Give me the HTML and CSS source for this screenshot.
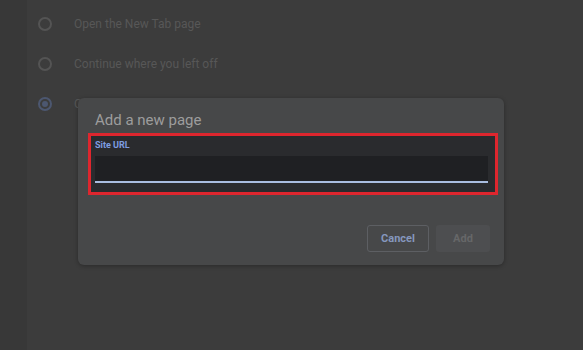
FILE: index.html
```html
<!DOCTYPE html>
<html lang="en">
<head>
  <meta charset="UTF-8">
  <meta name="viewport" content="width=device-width, initial-scale=1.0">
  <title>On startup</title>
  <link rel="stylesheet" href="styles.css">
</head>
<body>
  <div class="page">
    <div class="card">
      <div class="row">
        <span class="radio"></span>
        <span class="row-label">Open the New Tab page</span>
      </div>
      <div class="row">
        <span class="radio"></span>
        <span class="row-label">Continue where you left off</span>
      </div>
      <div class="row">
        <span class="radio checked"></span>
        <span class="row-label">Open a specific page or set of pages</span>
      </div>
    </div>
  </div>

  <div class="dialog">
    <div class="dialog-title">Add a new page</div>
    <div class="highlight">
      <div class="field-label">Site URL</div>
      <div class="field-input"></div>
    </div>
    <div class="dialog-buttons">
      <button class="button cancel">Cancel</button>
      <button class="button add">Add</button>
    </div>
  </div>
</body>
</html>
```

FILE: styles.css
```css
body {
  margin: 0;
  background-color: #383838;
  font-family: Roboto, "Liberation Sans", Arial, sans-serif;
  overflow: hidden;
}
.page {
  padding-left: 27px;
  height: 350px;
}
.card {
  height: 350px;
  padding-top: 4px;
  box-sizing: border-box;
  background-color: #3c3c3c;
}
.row {
  display: flex;
  align-items: center;
  height: 40px;
  padding-left: 11px;
}
.radio {
  width: 10px;
  height: 10px;
  border: 2px solid #545454;
  border-radius: 50%;
  margin-right: 22px;
  position: relative;
}
.radio.checked {
  border-color: #4c5770;
}
.radio.checked::after {
  content: "";
  position: absolute;
  left: 2px;
  top: 2px;
  width: 6px;
  height: 6px;
  border-radius: 50%;
  background-color: #4c5770;
}
.row-label {
  font-size: 12px;
  color: #575757;
}
.dialog {
  position: absolute;
  left: 78px;
  top: 98px;
  width: 426px;
  height: 167px;
  box-sizing: border-box;
  padding: 12px 6px 0 10px;
  background-color: #474849;
  border-radius: 6px;
  box-shadow: 0 1px 4px rgba(0, 0, 0, 0.3);
}
.dialog-title {
  height: 20px;
  line-height: 20px;
  padding-left: 7px;
  margin-bottom: 3px;
  font-size: 15px;
  color: #9d9d9d;
}
.highlight {
  height: 62px;
  box-sizing: border-box;
  border: 3px solid #de262e;
  padding: 3px 7px 9px 4px;
  background-color: #2a2b2e;
}
.field-label {
  height: 12px;
  line-height: 12px;
  font-size: 9px;
  font-weight: bold;
  color: #7e9de0;
}
.field-input {
  margin-top: 5px;
  height: 27px;
  box-sizing: border-box;
  background-color: #1f2023;
  border-bottom: 2px solid #a9bde0;
}
.dialog-buttons {
  display: flex;
  justify-content: flex-end;
  gap: 7px;
  margin-top: 30px;
  margin-right: 8px;
}
.button {
  height: 27px;
  border-radius: 3px;
  font-family: Roboto, "Liberation Sans", Arial, sans-serif;
  font-size: 11px;
  font-weight: bold;
  padding: 0;
}
.cancel {
  width: 62px;
  background-color: transparent;
  border: 1px solid #5d5f63;
  color: #8597bd;
}
.add {
  width: 54px;
  background-color: #4d4e50;
  border: none;
  color: #666768;
}
```
